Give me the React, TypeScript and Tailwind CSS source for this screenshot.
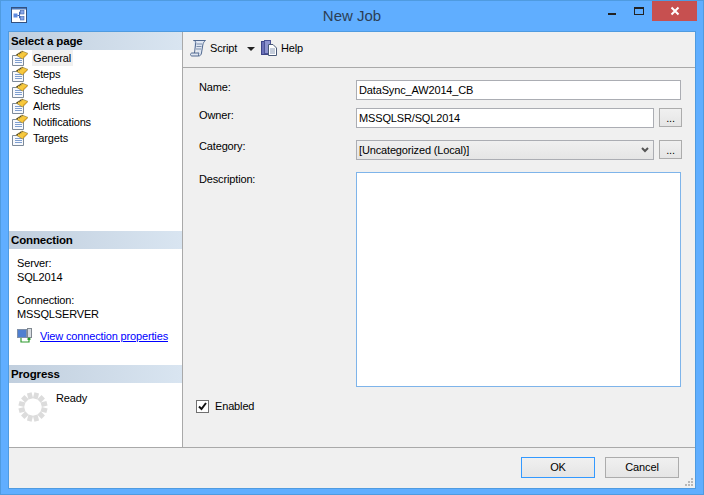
import React from "react";

const font = { fontFamily: '"Liberation Sans", Arial, sans-serif' };

function PageIcon() {
  return (
    <svg width="16" height="16" viewBox="0 0 16 16" className="shrink-0">
      <path d="M0.5 5.5H11.5V15.5H0.5Z" fill="#f8f9fc" stroke="#7d8a99" />
      <path d="M3 8.5H10M3 10.5H10M3 12.5H10" stroke="#7f9fd0" />
      <path d="M4 5L10 1L16 3.5L10.5 9Z" fill="#f7c93e" stroke="#8a7430" strokeWidth="0.6" />
      <path d="M5 5L10.5 1.5" stroke="#333" strokeWidth="1.4" strokeDasharray="1 1" />
      <path d="M11 7.5L15 4" stroke="#d99a20" strokeWidth="1" />
    </svg>
  );
}

function SectionHead({ children }: { children: React.ReactNode }) {
  return (
    <div className="h-[18px] shrink-0 pl-[2px] text-[11.5px] leading-[18px] font-bold text-black bg-gradient-to-r from-[#c1cfde] to-[#d9e5f1]">
      {children}
    </div>
  );
}

function Spinner() {
  const n = 12;
  return (
    <svg width="30" height="30" viewBox="0 0 30 30" className="mt-[9px] shrink-0">
      {Array.from({ length: n }).map((_, i) => (
        <rect key={i} x="12.6" y="0.5" width="4.8" height="6" fill="#dcdcdc" transform={`rotate(${(i * 360) / n + 15} 15 15)`} />
      ))}
    </svg>
  );
}

function Dots() {
  return (
    <button className="w-[23px] h-[19px] ml-[5px] shrink-0 border border-[#acacac] bg-gradient-to-b from-[#f0f0f0] to-[#e5e5e5] text-[11px] leading-[18px] text-black flex items-center justify-center">
      ...
    </button>
  );
}

export default function App() {
  return (
    <div style={font} className="w-[704px] h-[495px] flex flex-col overflow-hidden border border-[#4f9be0] bg-[#60aeff] text-[11px] tracking-[-0.15px] text-black">
      <div className="h-[30px] shrink-0 grid grid-cols-[1fr_auto_1fr] items-start">
        <svg width="16" height="16" viewBox="0 0 16 16" className="ml-[10px] mt-[6px]">
          <rect x="0.5" y="0.5" width="15" height="15" fill="#fff" stroke="#33517f" />
          <rect x="1" y="1" width="14" height="1.5" fill="#4a77b8" />
          <rect x="2.5" y="6.5" width="4" height="4" fill="#5d8ae0" />
          <rect x="9.5" y="3.5" width="3.5" height="3.5" fill="#88a6e8" stroke="#3b62b0" strokeWidth="0.6" />
          <rect x="9.5" y="9.5" width="3.5" height="3.5" fill="#88a6e8" stroke="#3b62b0" strokeWidth="0.6" />
          <path d="M6.5 8.5H8.5V5H9.5M8.5 8.5V11H9.5" stroke="#3b62b0" fill="none" />
        </svg>
        <div className="text-center text-[15px] tracking-normal leading-[30px] text-[#2c3e55]">New Job</div>
        <div className="flex items-start justify-end mr-[6px]">
          <svg width="26" height="20" viewBox="0 0 26 20">
            <rect x="8" y="12" width="8" height="2" fill="#222" />
          </svg>
          <svg width="26" height="20" viewBox="0 0 26 20">
            <rect x="8.5" y="6.5" width="9" height="7" fill="none" stroke="#222" />
            <rect x="8" y="6" width="10" height="2" fill="#222" />
          </svg>
          <div className="w-[45px] h-[20px] bg-[#c75050] flex items-center justify-center">
            <svg width="10" height="10" viewBox="0 0 10 10">
              <path d="M1.5 1.5L8.5 8.5M8.5 1.5L1.5 8.5" stroke="#fff" strokeWidth="2" />
            </svg>
          </div>
        </div>
      </div>

      <div className="flex-1 mx-[7px] mb-[5px] flex flex-col min-h-0 bg-[#f0f0f0] border border-[#4f9be0]">
        <div className="flex-1 flex min-h-0 border-b border-[#a9a9a9]">
          <div className="w-[174px] shrink-0 bg-white border-r border-[#a9a9a9] flex flex-col">
            <SectionHead>Select a page</SectionHead>
            <div className="h-[181px] shrink-0">
              {["General", "Steps", "Schedules", "Alerts", "Notifications", "Targets"].map((p, i) => (
                <div key={p} className="h-4 flex items-center pl-[3px]">
                  <PageIcon />
                  <span className={`ml-[4px] px-[1px] leading-4 ${i === 0 ? "bg-[#f0f0f0] pr-[2px]" : ""}`}>{p}</span>
                </div>
              ))}
            </div>
            <SectionHead>Connection</SectionHead>
            <div className="h-[116px] shrink-0 pl-[8px] pt-[7px] leading-[14px]">
              <div>Server:</div>
              <div>SQL2014</div>
              <div className="mt-[9px]">Connection:</div>
              <div>MSSQLSERVER</div>
              <div className="flex items-center mt-[7px] whitespace-nowrap">
                <svg width="16" height="16" viewBox="0 0 16 16" className="shrink-0">
                  <rect x="0.5" y="1.5" width="9" height="8" fill="#4f7fd0" stroke="#8090a8" />
                  <rect x="10.5" y="0.5" width="4" height="9" fill="#d8dce2" stroke="#808890" />
                  <path d="M4 10V14H12V10M12 10L10.5 11.5M12 10L13.5 11.5" fill="none" stroke="#2f9a2f" strokeWidth="1.2" />
                </svg>
                <span className="ml-[7px] text-[#0000ff] underline">View connection properties</span>
              </div>
            </div>
            <SectionHead>Progress</SectionHead>
            <div className="flex-1 flex pl-[9px]">
              <Spinner />
              <span className="ml-[8px] mt-[8px] leading-[14px]">Ready</span>
            </div>
          </div>

          <div className="flex-1 flex flex-col min-w-0">
            <div className="h-[36px] shrink-0 border-b border-[#a9a9a9] flex items-center pl-[7px] pb-[2px]">
              <svg width="16" height="17" viewBox="0 0 16 17" className="shrink-0">
                <path d="M3.5 0.5H15.5C14 1.5 13.2 3 12.8 5L11.5 13C11.2 15 10 16 8.5 16H2C0 16 0 13 2 13H9C8.5 13.5 8.5 15 8.5 16M3.5 0.5C5.5 0.5 6 2 5.6 4L4.5 13" fill="#dfe6f2" stroke="#50688f" />
                <path d="M6.5 4H12M6.5 6.5H11.5M6 9H11" stroke="#7d8fac" />
              </svg>
              <span className="ml-[4px] w-[27px]">Script</span>
              <svg width="8" height="4" viewBox="0 0 8 4" className="ml-[10px] shrink-0">
                <path d="M0 0H8L4 4Z" fill="#222" />
              </svg>
              <svg width="17" height="17" viewBox="0 0 17 17" className="ml-[6px] shrink-0">
                <rect x="0.5" y="1.5" width="8" height="13" fill="#6a70b8" stroke="#3e4588" />
                <rect x="3.5" y="0.5" width="6" height="13" fill="#8d93cf" stroke="#4b5296" />
                <path d="M7.5 4.5H12L15.5 8V15.5H7.5Z" fill="#fff" stroke="#4a5a78" />
                <path d="M9 9H14M9 11H14M9 13H14" stroke="#8a9ab5" />
              </svg>
              <span className="ml-[3px]">Help</span>
            </div>
            <div className="flex-1 pl-[16px] pt-[12px] flex flex-col">
              <div className="flex items-start">
                <div className="w-[157px] leading-[14px]">Name:</div>
                <div className="w-[325px] h-5 border border-[#abadb3] bg-white pl-[2px] leading-[18px]">DataSync_AW2014_CB</div>
              </div>
              <div className="flex items-start mt-[8px]">
                <div className="w-[157px] leading-[14px]">Owner:</div>
                <div className="w-[298px] h-5 border border-[#abadb3] bg-white pl-[2px] leading-[18px]">MSSQLSR/SQL2014</div>
                <Dots />
              </div>
              <div className="flex items-start mt-[12px]">
                <div className="w-[157px] leading-[14px] -mt-[1px]">Category:</div>
                <div className="w-[298px] h-5 border border-[#abadb3] bg-gradient-to-b from-[#f0f0f0] to-[#e5e5e5] pl-[2px] pr-[4px] flex items-center justify-between">
                  <span>[Uncategorized (Local)]</span>
                  <svg width="8" height="6" viewBox="0 0 8 6">
                    <path d="M1 1L4 4L7 1" fill="none" stroke="#555" strokeWidth="2" />
                  </svg>
                </div>
                <Dots />
              </div>
              <div className="flex items-start mt-[12px]">
                <div className="w-[157px] leading-[14px]">Description:</div>
                <div className="w-[325px] h-[215px] border border-[#7eb4ea] bg-white" />
              </div>
              <div className="flex items-center mt-[11px] -ml-[3px]">
                <div className="w-[13px] h-[13px] border border-[#707070] bg-white flex items-center justify-center">
                  <svg width="11" height="11" viewBox="0 0 11 11">
                    <path d="M2 5.5L4.5 8L9 2" fill="none" stroke="#111" strokeWidth="2" />
                  </svg>
                </div>
                <span className="ml-[6px]">Enabled</span>
              </div>
            </div>
          </div>
        </div>

        <div className="h-[40px] shrink-0 relative flex items-start justify-end pt-[9px] pr-[16px] gap-[10px]">
          <button className="w-[74px] h-[21px] border border-[#3399ff] bg-gradient-to-b from-[#f0f0f0] to-[#e5e5e5] leading-[19px]">OK</button>
          <button className="w-[74px] h-[21px] border border-[#acacac] bg-gradient-to-b from-[#f0f0f0] to-[#e5e5e5] leading-[19px]">Cancel</button>
          <svg width="9" height="9" viewBox="0 0 9 9" className="absolute right-[1px] bottom-[1px]">
            <path d="M6 0h2v2H6zM3 3h2v2H3zM6 3h2v2H6zM0 6h2v2H0zM3 6h2v2H3zM6 6h2v2H6z" fill="#b8b8b8" />
          </svg>
        </div>
      </div>
    </div>
  );
}
